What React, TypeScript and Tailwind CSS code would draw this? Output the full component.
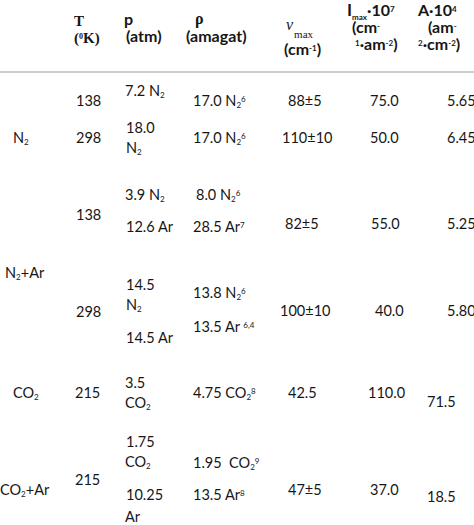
import type { ReactNode } from "react";

const sans = "font-['Lato','Open_Sans',sans-serif]";

function Sub({ children }: { children: ReactNode }) {
  return <sub className="text-[8px]">{children}</sub>;
}

function Sup({ children }: { children: ReactNode }) {
  return <sup className="text-[8px]">{children}</sup>;
}

// one text line inside a cell; className carries the offsets
function Line({ className = "", children }: { className?: string; children: ReactNode }) {
  return <div className={`h-5 leading-5 whitespace-nowrap ${className}`}>{children}</div>;
}

const cols = "grid grid-cols-[74px_48px_64px_92px_67px_70px_59px]";

function Header() {
  return (
    <div className={`${cols} h-[71px] font-bold whitespace-nowrap`}>
      <div />
      <div className="pt-[13px] font-['Liberation_Serif',serif] text-[15px] leading-[17px]">
        <div>T</div>
        <div>
          (<Sup>0</Sup>K)
        </div>
      </div>
      <div className="pt-[10px] pl-[2px] text-[16px] leading-[17px]">
        <div>p</div>
        <div className="pl-[2px]">(atm)</div>
      </div>
      <div className="pt-[10px] text-[16px] leading-[17px]">
        <div className="pl-[9px] font-['Liberation_Serif',serif]">ρ</div>
        <div className="pl-[0px]">(amagat)</div>
      </div>
      <div className="pt-[17px]">
        <div className="pl-[8px] font-['Liberation_Serif',serif] text-[16px] leading-4 font-normal italic">
          ν
          <sub className="-bottom-2 pl-[1px] text-[11px] not-italic">max</sub>
        </div>
        <div className="mt-[7px] pl-[6px] text-[16px] leading-[17px]">
          (cm<Sup>-1</Sup>)
        </div>
      </div>
      <div className="pt-[1px] text-[16px] leading-[17px]">
        <div className="pl-[2px]">
          <span className="text-[17px]">I</span>
          <sub className="-bottom-[4px] text-[8px]">max</sub>·10<Sup>7</Sup>
        </div>
        <div className="pl-[7px]">
          (cm<Sup>-</Sup>
        </div>
        <div className="pl-[10px]">
          <Sup>1</Sup>·am<Sup>-2</Sup>)
        </div>
      </div>
      <div className="pt-[1px] text-[16px] leading-[17px]">
        <div className="pl-[3px]">
          A·10<Sup>4</Sup>
        </div>
        <div className="pl-[13px]">
          (am<Sup>-</Sup>
        </div>
        <div className="pl-[3px]">
          <Sup>2</Sup>·cm<Sup>-2</Sup>)
        </div>
      </div>
    </div>
  );
}

export default function App() {
  return (
    <div className={`${sans} w-[474px] h-[525px] overflow-hidden bg-white text-[14.5px] text-[#161616]`}>
      <Header />
      <div className="h-[2px] bg-[#cdcdcd]" />

      {/* N2 */}
      <div className={`${cols} h-[97px]`}>
        <div>
          <Line className="mt-[55px] pl-[13px]">
            N<Sub>2</Sub>
          </Line>
        </div>
        <div>
          <Line className="mt-[18px] pl-[2px]">138</Line>
          <Line className="mt-[17px] pl-[2px]">298</Line>
        </div>
        <div>
          <Line className="mt-[8px] pl-[3px]">
            7.2 N<Sub>2</Sub>
          </Line>
          <Line className="mt-[17px] pl-[4px]">18.0</Line>
          <Line className="pl-[4px]">
            N<Sub>2</Sub>
          </Line>
        </div>
        <div>
          <Line className="mt-[18px] pl-[7px]">
            17.0 N<Sub>2</Sub>
            <Sup>6</Sup>
          </Line>
          <Line className="mt-[17px] pl-[7px]">
            17.0 N<Sub>2</Sub>
            <Sup>6</Sup>
          </Line>
        </div>
        <div>
          <Line className="mt-[18px] pl-[10px]">88±5</Line>
          <Line className="mt-[17px] pl-[4px]">110±10</Line>
        </div>
        <div>
          <Line className="mt-[18px] pl-[25px]">75.0</Line>
          <Line className="mt-[17px] pl-[25px]">50.0</Line>
        </div>
        <div>
          <Line className="mt-[18px] pl-[32px]">5.65</Line>
          <Line className="mt-[17px] pl-[32px]">6.45</Line>
        </div>
      </div>

      {/* N2 + Ar */}
      <div className={`${cols} h-[190px]`}>
        <div>
          <Line className="mt-[93px] pl-[5px]">
            N<Sub>2</Sub>+Ar
          </Line>
        </div>
        <div>
          <Line className="mt-[35px] pl-[2px]">138</Line>
          <Line className="mt-[77px] pl-[2px]">298</Line>
        </div>
        <div>
          <Line className="mt-[15px] pl-[3px]">
            3.9 N<Sub>2</Sub>
          </Line>
          <Line className="mt-[12px] pl-[4px]">12.6 Ar</Line>
          <Line className="mt-[38px] pl-[4px]">14.5</Line>
          <Line className="pl-[4px]">
            N<Sub>2</Sub>
          </Line>
          <Line className="mt-[13px] pl-[4px]">14.5 Ar</Line>
        </div>
        <div>
          <Line className="mt-[15px] pl-[10px]">
            8.0 N<Sub>2</Sub>
            <Sup>6</Sup>
          </Line>
          <Line className="mt-[12px] pl-[7px]">
            28.5 Ar<Sup>7</Sup>
          </Line>
          <Line className="mt-[46px] pl-[7px]">
            13.8 N<Sub>2</Sub>
            <Sup>6</Sup>
          </Line>
          <Line className="mt-[14px] pl-[7px]">
            13.5 Ar <Sup>6,4</Sup>
          </Line>
        </div>
        <div>
          <Line className="mt-[44px] pl-[7px]">82±5</Line>
          <Line className="mt-[67px] pl-[2px]">100±10</Line>
        </div>
        <div>
          <Line className="mt-[44px] pl-[26px]">55.0</Line>
          <Line className="mt-[67px] pl-[30px]">40.0</Line>
        </div>
        <div>
          <Line className="mt-[44px] pl-[32px]">5.25</Line>
          <Line className="mt-[67px] pl-[32px]">5.80</Line>
        </div>
      </div>

      {/* CO2 */}
      <div className={`${cols} h-[65px]`}>
        <div>
          <Line className="mt-[23px] pl-[13px]">
            CO<Sub>2</Sub>
          </Line>
        </div>
        <div>
          <Line className="mt-[23px] pl-[1px]">215</Line>
        </div>
        <div>
          <Line className="mt-[13px] pl-[3px]">3.5</Line>
          <Line className="pl-[3px]">
            CO<Sub>2</Sub>
          </Line>
        </div>
        <div>
          <Line className="mt-[23px] pl-[7px]">
            4.75 CO<Sub>2</Sub>
            <Sup>8</Sup>
          </Line>
        </div>
        <div>
          <Line className="mt-[23px] pl-[10px]">42.5</Line>
        </div>
        <div>
          <Line className="mt-[23px] pl-[23px]">110.0</Line>
        </div>
        <div>
          <Line className="mt-[32px] pl-[12px]">71.5</Line>
        </div>
      </div>

      {/* CO2 + Ar */}
      <div className={`${cols} h-[100px]`}>
        <div>
          <Line className="mt-[55px]">
            CO<Sub>2</Sub>+Ar
          </Line>
        </div>
        <div>
          <Line className="mt-[45px] pl-[1px]">215</Line>
        </div>
        <div>
          <Line className="mt-[7px] pl-[4px]">1.75</Line>
          <Line className="pl-[3px]">
            CO<Sub>2</Sub>
          </Line>
          <Line className="mt-[13px] pl-[4px]">10.25</Line>
          <Line className="mt-[2px] pl-[3px]">Ar</Line>
        </div>
        <div>
          <Line className="mt-[28px] pl-[7px]">
            1.95&nbsp; CO<Sub>2</Sub>
            <Sup>9</Sup>
          </Line>
          <Line className="mt-[12px] pl-[7px]">
            13.5 Ar<Sup>8</Sup>
          </Line>
        </div>
        <div>
          <Line className="mt-[55px] pl-[10px]">47±5</Line>
        </div>
        <div>
          <Line className="mt-[55px] pl-[25px]">37.0</Line>
        </div>
        <div>
          <Line className="mt-[62px] pl-[12px]">18.5</Line>
        </div>
      </div>
    </div>
  );
}
